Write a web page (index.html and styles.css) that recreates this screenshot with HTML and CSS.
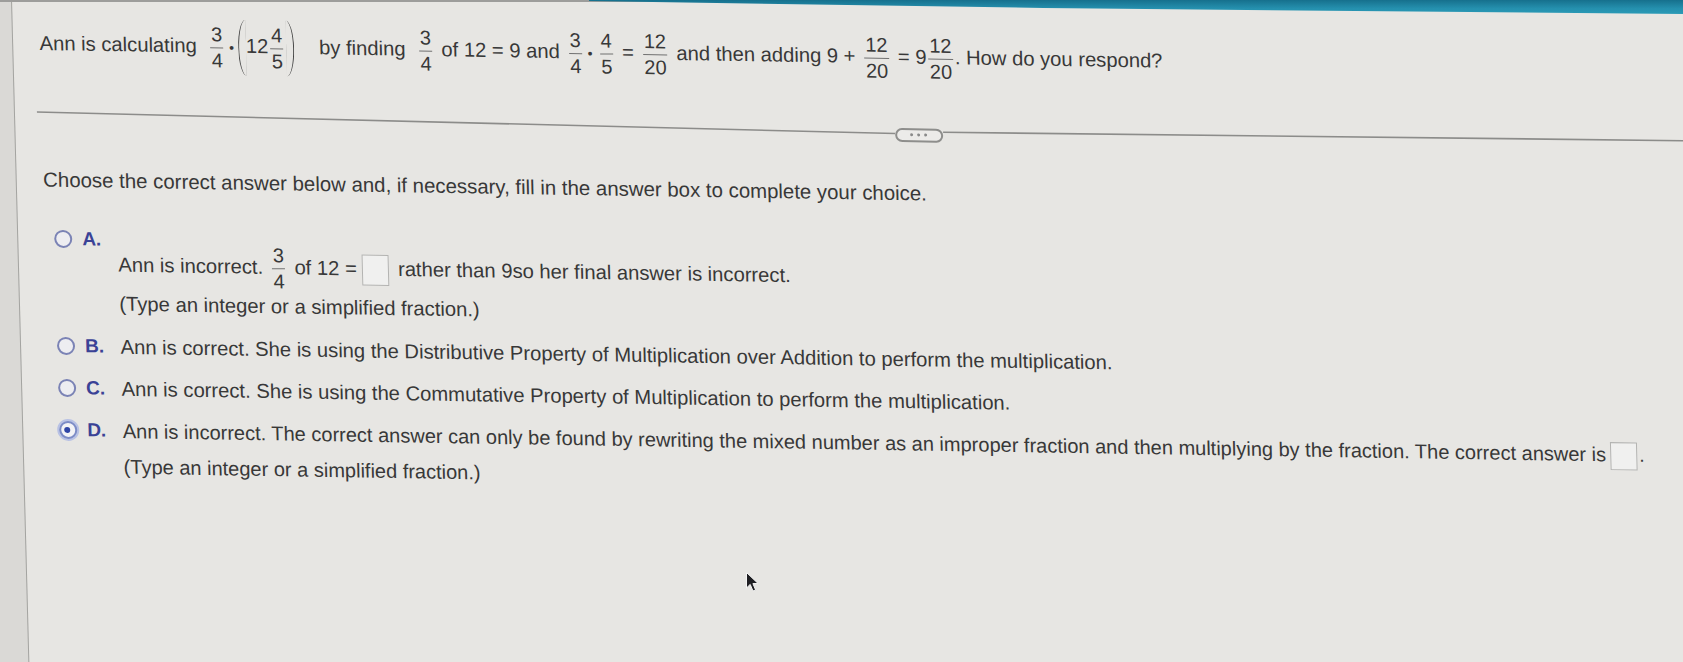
FILE: index.html
```html
<!DOCTYPE html>
<html lang="en">
<head>
<meta charset="utf-8">
<title>Question</title>
<link rel="stylesheet" href="styles.css">
</head>
<body>
<div class="topedge"></div>
<div class="topbar"></div>
<div class="page">
  <div class="rail"></div>
  <main class="content">
    <p class="question">Ann is calculating <span class="frac gap-l"><span class="num">3</span><span class="den">4</span></span><span class="dot">•</span><span class="group"><span class="pl"></span>12<span class="frac tight"><span class="num">4</span><span class="den">5</span></span><span class="pr"></span></span> by finding <span class="frac gap-l"><span class="num">3</span><span class="den">4</span></span> of 12 = 9 and <span class="frac"><span class="num">3</span><span class="den">4</span></span><span class="dot">•</span><span class="frac"><span class="num">4</span><span class="den">5</span></span> = <span class="frac"><span class="num">12</span><span class="den">20</span></span> and then adding 9 + <span class="frac"><span class="num">12</span><span class="den">20</span></span> = 9<span class="frac tight"><span class="num">12</span><span class="den">20</span></span>. How do you respond?</p>

    <div class="divider">
      <svg class="rule rule-left" aria-hidden="true"><line x1="0" y1="6.5" x2="100%" y2="14.5"/></svg>
      <button class="more" type="button" aria-label="more"><span></span><span></span><span></span></button>
      <svg class="rule rule-right" aria-hidden="true"><line x1="0" y1="12.5" x2="100%" y2="9"/></svg>
    </div>

    <p class="instruction">Choose the correct answer below and, if necessary, fill in the answer box to complete your choice.</p>

    <ul class="options">
      <li class="option option-a">
        <span class="radio"></span>
        <span class="label">A.</span>
        <div class="body body-a">
          <p class="line">Ann is incorrect. <span class="frac"><span class="num">3</span><span class="den">4</span></span> of 12 = <span class="answer-box tall"></span> rather than 9so her final answer is incorrect.</p>
          <p class="line hint hint-a">(Type an integer or a simplified fraction.)</p>
        </div>
      </li>
      <li class="option option-b">
        <span class="radio"></span>
        <span class="label">B.</span>
        <div class="body"><p class="line">Ann is correct. She is using the Distributive Property of Multiplication over Addition to perform the multiplication.</p></div>
      </li>
      <li class="option option-c">
        <span class="radio"></span>
        <span class="label">C.</span>
        <div class="body"><p class="line">Ann is correct. She is using the Commutative Property of Multiplication to perform the multiplication.</p></div>
      </li>
      <li class="option option-d">
        <span class="radio checked"></span>
        <span class="label">D.</span>
        <div class="body">
          <p class="line">Ann is incorrect. The correct answer can only be found by rewriting the mixed number as an improper fraction and then multiplying by the fraction. The correct answer is<span class="answer-box"></span>.</p>
          <p class="line hint hint-d">(Type an integer or a simplified fraction.)</p>
        </div>
      </li>
    </ul>
  </main>
</div>
<svg class="cursor" width="16" height="22" viewBox="0 0 16 22" aria-hidden="true"><path d="M1.5 1.5 L1.5 17 L5.2 13.4 L8 20 L10.6 18.9 L7.9 12.6 L13 12.4 Z"/></svg>
</body>
</html>
```

FILE: styles.css
```css
html, body {
  margin: 0;
  padding: 0;
  height: 100%;
  overflow: hidden;
  background: #e7e6e3;
}

body {
  position: relative;
  font-family: "Liberation Sans", Arial, Helvetica, sans-serif;
  color: #383838;
}

p { margin: 0; }

/* top edge of the screen */
.topedge {
  position: absolute;
  z-index: 3;
  left: 0;
  top: 0;
  width: 100%;
  height: 2px;
  background: #9d9d9b;
}

.topbar {
  position: absolute;
  z-index: 4;
  left: 0;
  top: 0;
  width: 100%;
  height: 14px;
  background: linear-gradient(#16708d, #2590ae 60%, #2a9ab6);
  clip-path: polygon(35% 0, 100% 0, 100% 14px, 62% 8px, 35% 1px);
}

/* page, slightly skewed like the photographed screen */
.page {
  display: flex;
  width: 1790px;
  height: 780px;
  margin: -30px 0 0 -40px;
  transform: skew(1.5deg, 0.9deg);
  transform-origin: 40px 30px;
}

.rail {
  flex: none;
  width: 51px;
  background: #dad9d6;
  border-right: 1.5px solid #a4a4a1;
}

.content {
  flex: 1;
  padding: 30px 0 0 26.5px;
  font-size: 20.2px;
  line-height: 24px;
}

/* question */
.question {
  padding-top: 16px;
  white-space: nowrap;
}

.frac {
  display: inline-flex;
  flex-direction: column;
  align-items: center;
  vertical-align: middle;
  margin: 0 3.5px;
  font-size: 20px;
}

.frac.gap-l { margin-left: 8px; }
.frac.tight { margin: 0 2px; }

.num, .den {
  display: block;
  line-height: 25px;
  padding: 0 1px;
}

.num { border-bottom: 1px solid #707070; }

.dot {
  display: inline-block;
  font-size: 14px;
  vertical-align: middle;
  margin: 0 4px 0 2px;
}

.group { white-space: nowrap; }

.pl, .pr {
  display: inline-block;
  width: 7px;
  height: 56px;
  vertical-align: middle;
}

.pl {
  border-left: 1.6px solid #444;
  border-radius: 100% 0 0 100% / 50% 0 0 50%;
}

.pr {
  border-right: 1.6px solid #444;
  border-radius: 0 100% 100% 0 / 0 50% 50% 0;
  margin-left: 1px;
  margin-right: 19px;
}

/* divider with the "..." button */
.divider {
  display: flex;
  align-items: flex-start;
  height: 20px;
  margin: 33px 0 0 -5px;
}

.rule {
  display: block;
  height: 20px;
  overflow: visible;
}

.rule line {
  stroke: #8c8c8a;
  stroke-width: 1.6;
}

.rule-left { flex: none; width: 858px; }
.rule-right { flex: 1; }

.more {
  flex: none;
  box-sizing: border-box;
  width: 48px;
  height: 14px;
  margin-top: 8.5px;
  padding: 0;
  border: 2px solid #8e8e8c;
  border-radius: 7px;
  background: #ecebe9;
  display: flex;
  justify-content: center;
  align-items: center;
  gap: 4px;
}

.more span {
  width: 3px;
  height: 3px;
  border-radius: 50%;
  background: #8a8a8a;
}

/* instruction */
.instruction {
  margin-top: 42px;
  font-size: 20.4px;
}

/* options */
.options {
  list-style: none;
  margin: 34.5px 0 0;
  padding: 0 0 0 9px;
}

.option {
  display: grid;
  grid-template-columns: 17px 24px 1fr;
  column-gap: 11.5px;
  align-items: start;
}

.option-b { margin-top: 19.3px; }
.option-c { margin-top: 17.5px; }
.option-d { margin-top: 18.5px; }

.option-d .line { font-size: 20px; }

.radio {
  box-sizing: border-box;
  width: 18px;
  height: 18px;
  margin-top: 3px;
  border: 2.5px solid #7b83b5;
  border-radius: 50%;
  background: #ededf1;
}

.radio.checked {
  position: relative;
  border-color: #7d8cc6;
  background: #f3f3f6;
  box-shadow: 0 0 0 2px #b9c2e4;
}

.radio.checked::after {
  content: "";
  position: absolute;
  left: 3.5px;
  top: 3.5px;
  width: 6px;
  height: 6px;
  border-radius: 50%;
  background: #2f45a6;
}

.label {
  font-weight: bold;
  font-size: 19px;
  color: #3a4296;
  white-space: nowrap;
}

.body-a { margin-top: 13.5px; }

.line { white-space: nowrap; }

.hint-a { margin-top: 0; }
.hint-d { margin-top: 8px; }

.answer-box {
  display: inline-block;
  box-sizing: border-box;
  width: 27px;
  height: 28px;
  margin: 0 2px 0 4px;
  vertical-align: middle;
  border: 1px solid #b3b3b1;
  background: #f0f0ef;
}

.answer-box.tall {
  height: 31px;
  margin: 0 3px 0 0;
}

/* mouse pointer */
.cursor {
  position: absolute;
  left: 745px;
  top: 571px;
  z-index: 5;
}

.cursor path {
  fill: #1e1e22;
  stroke: #f4f4f4;
  stroke-width: 1;
  stroke-linejoin: round;
}
```
